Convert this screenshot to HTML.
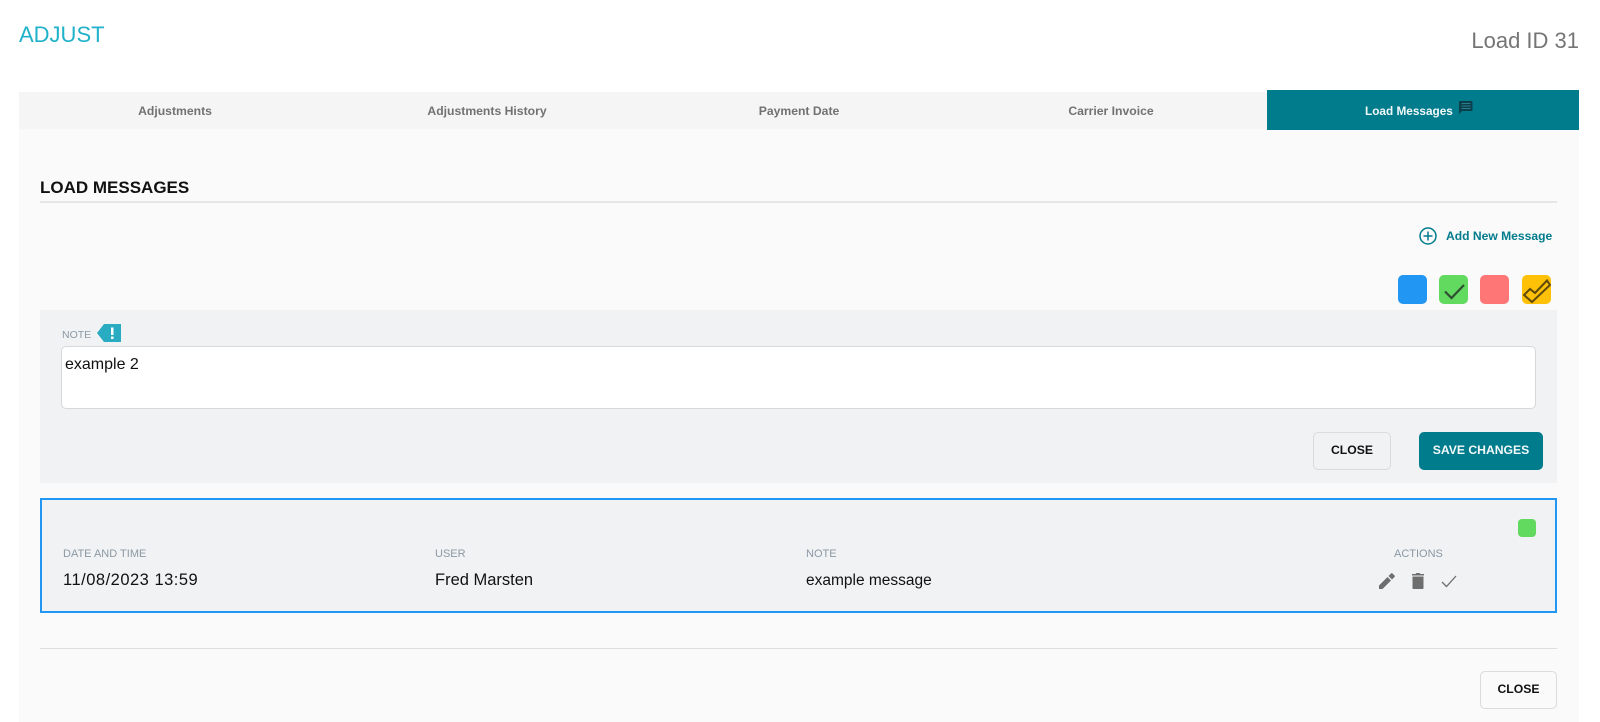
<!DOCTYPE html>
<html><head><meta charset="utf-8"><style>
html,body{margin:0;padding:0;width:1600px;height:722px;overflow:hidden;background:#fff;font-family:"Liberation Sans",sans-serif}
.a{position:absolute;white-space:nowrap}
.tab{position:absolute;top:93px;height:37px;line-height:37px;width:312px;text-align:center;font-size:12.2px;font-weight:bold;color:#727272}
.lab{position:absolute;white-space:nowrap;font-size:11px;color:#8a99a5;line-height:14px}
.val{position:absolute;white-space:nowrap;font-size:16.5px;color:#111;line-height:20px}
.btn{position:absolute;box-sizing:border-box;height:38px;line-height:35px;text-align:center;border:1.5px solid #d9dbdd;border-radius:5px;font-size:12.2px;font-weight:bold;color:#111}
.sw{position:absolute;top:275px;width:29px;height:29px;border-radius:5px}
</style></head><body>
<div class="a" style="left:19px;top:22px;font-size:22px;line-height:26px;color:#20b2ca">ADJUST</div>
<div class="a" style="right:21px;top:28px;font-size:22px;line-height:26px;color:#757575">Load ID 31</div>

<div class="a" style="left:19px;top:92px;width:1560px;height:630px;background:#fafafa"></div>
<div class="a" style="left:19px;top:92px;width:1248px;height:37px;background:#f5f5f5"></div>
<div class="tab" style="left:19px">Adjustments</div>
<div class="tab" style="left:331px">Adjustments History</div>
<div class="tab" style="left:643px">Payment Date</div>
<div class="tab" style="left:955px">Carrier Invoice</div>
<div class="a" style="left:1267px;top:90px;width:312px;height:40px;background:#017c8c"></div>
<div class="a" style="left:1365px;top:102px;font-size:11.8px;line-height:18px;font-weight:bold;color:#f2f8f9">Load Messages</div>
<svg class="a" style="left:1458px;top:100px" width="15" height="15" viewBox="0 0 15 15"><path d="M1.5 1H13.500a1 1 0 0 1 1 1V10a1 1 0 0 1-1 1H4L1 14V2a1 1 0 0 1 .5-1z" fill="#0b3f4c"/><path d="M3.500 3.500H12.500M3.500 6H12.500M3.500 8.500H12.500" stroke="#2a7d8a" stroke-width="1"/></svg>

<div class="a" style="left:40px;top:178px;font-size:17px;line-height:20px;font-weight:bold;color:#111">LOAD MESSAGES</div>
<div class="a" style="left:40px;top:201px;width:1517px;height:2px;background:#e6e6e6"></div>

<svg class="a" style="left:1419px;top:227px" width="18" height="18" viewBox="0 0 18 18"><circle cx="9" cy="9" r="8" fill="none" stroke="#017c8c" stroke-width="1.500"/><path d="M9 4.500V13.500M4.500 9H13.500" stroke="#017c8c" stroke-width="1.500"/></svg>
<div class="a" style="left:1446px;top:227px;font-size:12.1px;line-height:18px;font-weight:bold;color:#017c8c">Add New Message</div>

<div class="sw" style="left:1398px;background:#2196f3"></div>
<div class="sw" style="left:1439px;background:#62d95f"></div>
<div class="sw" style="left:1480px;background:#ff7676"></div>
<div class="sw" style="left:1522px;background:#ffc107"></div>
<svg class="a" style="left:1439px;top:275px" width="29" height="29" viewBox="0 0 29 29"><path d="M6 16.500L12.500 23L25 10" fill="none" stroke="#2f4f33" stroke-width="2.200"/></svg>
<svg class="a" style="left:1522px;top:275px" width="29" height="29" viewBox="0 0 29 29"><path d="M2 20L8 14L13 18L25 5.500L28 10L10 27Z" fill="none" stroke="#5f4a0c" stroke-width="2"/></svg>

<div class="a" style="left:40px;top:310px;width:1517px;height:173px;background:#f1f2f4"></div>
<div class="lab" style="left:62px;top:328px;font-size:10.500px">NOTE</div>
<svg class="a" style="left:97px;top:324px" width="24" height="18" viewBox="0 0 24 18"><path d="M7 0H24V18H7L0 9Z" fill="#29acc2"/><rect x="14" y="3.500" width="2.500" height="7.500" fill="#fff"/><rect x="14" y="12.500" width="2.500" height="2.500" fill="#fff"/></svg>
<div class="a" style="left:61px;top:346px;width:1475px;height:63px;box-sizing:border-box;background:#fff;border:1.500px solid #d6d8da;border-radius:5px"></div>
<div class="a" style="left:65px;top:355px;font-size:16px;line-height:20px;color:#111">example 2</div>
<div class="btn" style="left:1313px;top:432px;width:78px">CLOSE</div>
<div class="btn" style="left:1419px;top:432px;width:124px;background:#017c8c;border-color:#017c8c;color:#f4f9fa">SAVE CHANGES</div>

<div class="a" style="left:40px;top:498px;width:1517px;height:115px;box-sizing:border-box;background:#f1f2f4;border:2px solid #2196f3"></div>
<div class="a" style="left:1518px;top:519px;width:18px;height:18px;border-radius:4px;background:#62d95f"></div>
<div class="lab" style="left:63px;top:547px">DATE AND TIME</div>
<div class="lab" style="left:435px;top:547px">USER</div>
<div class="lab" style="left:806px;top:547px">NOTE</div>
<div class="lab" style="left:1394px;top:547px">ACTIONS</div>
<div class="val" style="left:63px;top:570px;letter-spacing:.5px">11/08/2023 13:59</div>
<div class="val" style="left:435px;top:570px">Fred Marsten</div>
<div class="val" style="left:806px;top:571px;font-size:15.5px">example message</div>
<svg class="a" style="left:1378px;top:572px" width="18" height="18" viewBox="0 0 18 18"><path d="M1 13.500V17H4.500L13 8.500L9.500 5ZM10.500 4L14 7.500L16.500 5C17 4.500 17 4 16.500 3.500L14.500 1.500C14 1 13.500 1 13 1.500Z" fill="#6e6e6e"/></svg>
<svg class="a" style="left:1411px;top:572px" width="14" height="18" viewBox="0 0 14 18"><path d="M1.500 4.500H12.500V16C12.500 16.800 12 17 11.500 17H2.500C2 17 1.500 16.800 1.500 16ZM1 2H4.500L5.500 1H8.500L9.500 2H13V3.500H1Z" fill="#6e6e6e"/></svg>
<svg class="a" style="left:1440px;top:572px" width="18" height="18" viewBox="0 0 18 18"><path d="M2 10L6.500 14.500L16 4" fill="none" stroke="#6e6e6e" stroke-width="1.300"/></svg>

<div class="a" style="left:40px;top:648px;width:1517px;height:1px;background:#dedede"></div>
<div class="btn" style="left:1480px;top:671px;width:77px">CLOSE</div>
</body></html>
